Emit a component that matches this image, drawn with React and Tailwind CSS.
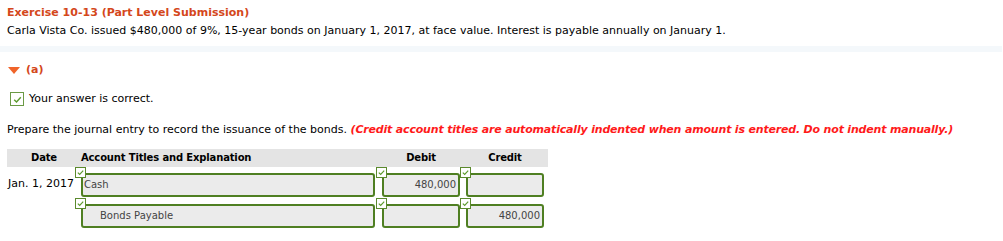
import React from "react";

const Tick = ({ className = "" }) => (
  <svg viewBox="0 0 10 10" className={className}>
    <path d="M2 5.2 L4.1 7.2 L8 3" fill="none" stroke="#5c9a2c" strokeWidth="1.3" />
  </svg>
);

const Field = ({ width, value = "", align = "left", indent = false }) => (
  <div className="relative" style={{ width }}>
    <div className="absolute -left-[6px] -top-[6px] w-[11px] h-[11px] bg-white border border-[#5b8a2d] flex items-center justify-center">
      <Tick className="w-[9px] h-[9px]" />
    </div>
    <div
      className={
        "h-[24px] rounded-[3px] border-2 border-[#4f7f22] bg-[#ebebeb] flex items-center text-[10px] text-[#444] " +
        (align === "right" ? "justify-end pr-[2px]" : indent ? "pl-[17px]" : "pl-[1px]")
      }
    >
      {value}
    </div>
  </div>
);

const Row = ({ date, account, debit, credit, indent }) => (
  <div className="flex items-center">
    <div className="w-[74px] text-[11px] text-black pl-[1px]">{date}</div>
    <Field width={294} value={account} indent={indent} />
    <div className="w-[7px]" />
    <Field width={78} value={debit} align="right" />
    <div className="w-[6px]" />
    <Field width={78} value={credit} align="right" />
  </div>
);

export default function App() {
  return (
    <div className="bg-white w-[1003px] h-[241px] overflow-hidden" style={{ fontFamily: '"DejaVu Sans", Verdana, sans-serif' }}>
      <div className="px-[7px] pt-[5px]">
        <div className="text-[11px] leading-[16px] font-bold text-[#d4471b]">
          Exercise 10-13 (Part Level Submission)
        </div>
        <div className="mt-[3px] text-[11px] leading-[14px] text-black">
          Carla Vista Co. issued $480,000 of 9%, 15-year bonds on January 1, 2017, at face value. Interest is payable annually on January 1.
        </div>
      </div>
      <div className="mt-[8px] h-[6px] bg-[#f4f8fb] w-[1002px]" />
      <div className="px-[7px]">
        <div className="mt-[10px] flex items-center h-[16px]">
          <svg viewBox="0 0 12 7" className="w-[12px] h-[7px] ml-[1px]">
            <path d="M0 0 H12 L6 7 Z" fill="#f0642a" />
          </svg>
          <span className="ml-[6px] text-[11px] font-bold text-[#d4471b]">(a)</span>
        </div>
        <div className="mt-[13px] flex items-center">
          <div className="ml-[3px] w-[14px] h-[14px] border border-[#6b9a45] bg-white flex items-center justify-center">
            <Tick className="w-[11px] h-[11px]" />
          </div>
          <span className="ml-[5px] text-[11px] text-black">Your answer is correct.</span>
        </div>
        <div className="mt-[15px] text-[11px] leading-[14px] text-black">
          Prepare the journal entry to record the issuance of the bonds.{" "}
          <span className="font-bold italic text-[#ff1a1a] tracking-[-0.18px]">
            (Credit account titles are automatically indented when amount is entered. Do not indent manually.)
          </span>
        </div>
        <div className="mt-[12px] w-[541px] h-[18px] bg-[#e4e4e4] flex items-center text-[10px] tracking-[-0.15px] font-bold text-black">
          <div className="w-[74px] text-center">Date</div>
          <div className="w-[301px]">Account Titles and Explanation</div>
          <div className="w-[78px] text-center">Debit</div>
          <div className="w-[6px]" />
          <div className="w-[78px] text-center">Credit</div>
        </div>
        <div className="mt-[6px] flex flex-col gap-[7px]">
          <Row date="Jan. 1, 2017" account="Cash" debit="480,000" credit="" />
          <Row date="" account="Bonds Payable" debit="" credit="480,000" indent />
        </div>
      </div>
    </div>
  );
}
